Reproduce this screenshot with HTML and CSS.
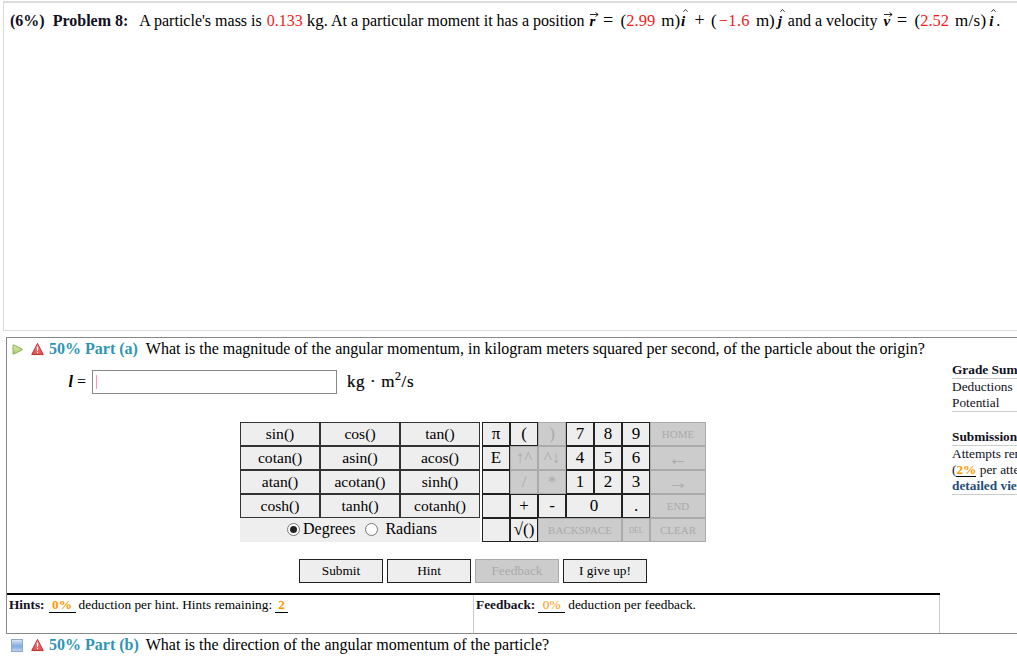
FILE: index.html
```html
<!DOCTYPE html>
<html lang="en">
<head>
<meta charset="utf-8">
<title>Problem 8</title>
<link rel="stylesheet" href="styles.css">
</head>
<body>
<svg class="defs" width="0" height="0" aria-hidden="true">
  <defs>
    <linearGradient id="gTri" x1="0" y1="0" x2="0" y2="1"><stop offset="0" stop-color="#dcebb0"/><stop offset="1" stop-color="#a9c968"/></linearGradient>
    <linearGradient id="gWarn" x1="0" y1="0" x2="0" y2="1"><stop offset="0" stop-color="#f59090"/><stop offset="1" stop-color="#e04a4a"/></linearGradient>
    <linearGradient id="gBox" x1="0" y1="0" x2="0" y2="1"><stop offset="0" stop-color="#dfe9f5"/><stop offset=".55" stop-color="#7fabe0"/><stop offset="1" stop-color="#c3d6ee"/></linearGradient>
  </defs>
</svg>
<section class="problem">
  <p class="statement"><b class="head">(6%)</b><b class="head pname">Problem 8:</b><span>A particle's mass is <span class="red">0.133</span> <span class="kg">kg</span>. At a particular moment it has a position</span><span class="acc vec ml5">r<svg class="arrow" viewBox="0 0 9 5"><path d="M0 2.5H8M5.5 .5L8.2 2.5L5.5 4.5" fill="none" stroke="#111" stroke-width=".9"/></svg></span><span class="op ml5">=</span><span class="m ml7">(<span class="val">2.99</span><span class="unit-m">m</span>)</span><span class="acc hatted ml1">i<svg class="hat" viewBox="0 0 5 3"><path d="M.4 2.8L2.5 .4L4.6 2.8" fill="none" stroke="#111" stroke-width=".8"/></svg></span><span class="op ml6">+</span><span class="m ml6">(<span class="val neg">−1.6</span><span class="unit-m">m</span>)</span><span class="acc hatted ml3 jw">j<svg class="hat" viewBox="0 0 5 3"><path d="M.4 2.8L2.5 .4L4.6 2.8" fill="none" stroke="#111" stroke-width=".8"/></svg></span><span class="ml4 plain">and a velocity</span><span class="acc vec ml6">v<svg class="arrow" viewBox="0 0 9 5"><path d="M0 2.5H8M5.5 .5L8.2 2.5L5.5 4.5" fill="none" stroke="#111" stroke-width=".9"/></svg></span><span class="op ml5">=</span><span class="m ml7">(<span class="val">2.52</span><span class="unit-m wide">m/s</span>)</span><span class="acc hatted ml3">i<svg class="hat" viewBox="0 0 5 3"><path d="M.4 2.8L2.5 .4L4.6 2.8" fill="none" stroke="#111" stroke-width=".8"/></svg></span><span class="plain">.</span></p>
</section>
<section class="part">
  <div class="main">
    <h2 class="part-title">
      <svg class="tri" viewBox="0 0 11 11"><path d="M1 1.2 Q1 .6 1.7 .9 L10 5 Q10.6 5.5 10 6 L1.7 10.1 Q1 10.4 1 9.8 Z" fill="url(#gTri)" stroke="#8fae5c" stroke-width="1"/></svg>
      <svg class="warn" viewBox="0 0 14 14"><path d="M7 1 L13.2 13 H.8 Z" fill="url(#gWarn)" stroke="#b82828" stroke-width="1" stroke-linejoin="round"/><path d="M6.2 4.6h1.6l-.3 4.6h-1z M6.3 10h1.4v1.6H6.3z" fill="#fff"/></svg>
      <span class="pct">50% Part (a)</span><span>What is the magnitude of the angular momentum, in kilogram meters squared per second, of the particle about the origin?</span>
    </h2>
    <div class="answer">
      <span class="sym"><em>l</em><span class="sym-eq">=</span></span>
      <span class="input"><span class="caret"></span></span>
      <span class="unit">kg · m<sup>2</sup>/s</span>
    </div>
    <div class="calc">
      <div class="funcs">
        <div class="fk">sin()</div><div class="fk">cos()</div><div class="fk">tan()</div>
        <div class="fk">cotan()</div><div class="fk">asin()</div><div class="fk">acos()</div>
        <div class="fk">atan()</div><div class="fk">acotan()</div><div class="fk">sinh()</div>
        <div class="fk">cosh()</div><div class="fk">tanh()</div><div class="fk">cotanh()</div>
        <div class="angle"><span class="radio on"></span>Degrees<span class="radio off"></span>Radians</div>
      </div>
      <div class="keys">
        <div class="k">π</div><div class="k">(</div><div class="k x">)</div><div class="k">7</div><div class="k">8</div><div class="k">9</div><div class="k x sm">HOME</div>
        <div class="k">E</div><div class="k x">↑^</div><div class="k x">^↓</div><div class="k">4</div><div class="k">5</div><div class="k">6</div><div class="k x arw">←</div>
        <div class="k"></div><div class="k x">/</div><div class="k x">*</div><div class="k">1</div><div class="k">2</div><div class="k">3</div><div class="k x arw">→</div>
        <div class="k"></div><div class="k">+</div><div class="k">-</div><div class="k w2">0</div><div class="k">.</div><div class="k x sm">END</div>
        <div class="k"></div><div class="k">√()</div><div class="k x sm w3">BACKSPACE</div><div class="k x xs">DEL</div><div class="k x sm">CLEAR</div>
      </div>
    </div>
    <div class="actions">
      <button class="btn" type="button">Submit</button>
      <button class="btn" type="button">Hint</button>
      <button class="btn dis" type="button">Feedback</button>
      <button class="btn" type="button">I give up!</button>
    </div>
    <div class="foot">
      <div class="hints"><b>Hints:</b><span class="ul w0">0%</span>deduction per hint. Hints remaining:<span class="ul w1">2</span></div>
      <div class="fb"><b>Feedback:</b><span class="ul w2u">0%</span>deduction per feedback.</div>
    </div>
  </div>
  <aside class="side">
    <h3>Grade Summary</h3>
    <div class="rows"><div>Deductions</div><div>Potential</div></div>
    <h3 class="sub">Submissions</h3>
    <div class="rows">
      <div>Attempts remaining</div>
      <div>(<span class="ul side-ul">2%</span> per attempt)</div>
      <div class="link">detailed view</div>
    </div>
  </aside>
</section>
<h2 class="part-title next">
  <svg class="minus" viewBox="0 0 12 13"><rect x=".5" y=".5" width="11" height="12" fill="url(#gBox)" stroke="#8fa8c8"/></svg>
  <svg class="warn" viewBox="0 0 14 14"><path d="M7 1 L13.2 13 H.8 Z" fill="url(#gWarn)" stroke="#b82828" stroke-width="1" stroke-linejoin="round"/><path d="M6.2 4.6h1.6l-.3 4.6h-1z M6.3 10h1.4v1.6H6.3z" fill="#fff"/></svg>
  <span class="pct b">50% Part (b)</span><span>What is the direction of the angular momentum of the particle?</span>
</h2>
</body>
</html>
```
FILE: styles.css
```css
html, body { margin: 0; padding: 0; }
body {
  width: 1017px; height: 658px; overflow: hidden; background: #fff;
  font-family: "Liberation Serif", "Times New Roman", serif; color: #000;
  font-size: 16px;
}
.defs { position: absolute; }
.problem {
  box-sizing: border-box; height: 330px; margin: 1px 0 0 3px;
  border-top: 2px solid #ddd; border-left: 1px solid #ddd;
  border-bottom: 1px solid #ddd;
}
.statement { margin: 0; padding: 9px 0 0 6px; font-size: 16px; line-height: 18px; white-space: nowrap; }
.head { color: #112; margin-right: 8px; }
.pname { margin-right: 11px; }
.red { color: #f01c1c; margin-left: 1px; }
.kg { font-size: 17px; }
.ml1 { margin-left: 1px; }
.ml3 { margin-left: 3px; }
.ml4 { margin-left: 4px; }
.ml5 { margin-left: 5px; }
.ml6 { margin-left: 6px; }
.ml7 { margin-left: 7px; }
.plain { font-size: 16px; }
.m { font-size: 17px; }
.val { color: #f01c1c; font-size: 16.5px; }
.neg { margin-left: 2px; letter-spacing: .3px; }
.unit-m { margin-left: 6px; }
.unit-m.wide { letter-spacing: .3px; }
.op { display: inline-block; width: 11px; text-align: center; font-size: 18px; line-height: 14px; }
.acc { position: relative; display: inline-block; width: 7px; font-style: italic; font-weight: bold; font-size: 15px; line-height: 14px; }
.vec { width: 8px; }
.jw { width: 6px; }
.hat { position: absolute; left: 2px; top: -5px; width: 5px; height: 3px; }
.arrow { position: absolute; left: 0; top: -2px; width: 9px; height: 5px; }
.part {
  box-sizing: border-box; width: 1100px; height: 297px; margin: 6px 0 0 6px;
  border-top: 1px solid #888; border-left: 1px solid #888; border-bottom: 1px solid #888;
  display: flex;
}
.main { width: 933px; flex: none; display: flex; flex-direction: column; }
.part-title { margin: 0; font-size: 16px; font-weight: normal; line-height: 20px; display: flex; align-items: center; white-space: nowrap; }
.main .part-title { padding: 1px 0 0 5px; height: 20px; }
.tri { width: 11px; height: 11px; flex: none; margin-right: 8px; }
.warn { width: 13px; height: 14px; flex: none; margin-right: 5px; }
.pct { color: #2f95b8; font-weight: bold; margin-right: 8px; }
.pct.b { margin-right: 7px; }
.answer { display: flex; align-items: center; height: 24px; margin-top: 11px; }
.sym { box-sizing: border-box; width: 85px; padding-right: 6px; display: flex; justify-content: flex-end; font-size: 16px; }
.sym em { font-weight: bold; margin-right: 4px; }
.input { box-sizing: border-box; width: 245px; height: 24px; border: 1px solid #888; display: flex; align-items: center; padding-left: 3px; margin-right: 10px; }
.caret { width: 1px; height: 14px; background: #f59ab8; }
.unit { font-size: 17px; letter-spacing: .6px; white-space: nowrap; -webkit-text-stroke: .2px #000; }
.unit sup { font-size: 12px; line-height: 0; }
.calc { display: flex; margin: 28px 0 0 233px; }
.funcs { display: grid; grid-template-columns: repeat(3, 80px); grid-auto-rows: 24px; width: 240px; }
.fk { box-sizing: border-box; background: #eee; border: 1px solid #333; display: flex; align-items: center; justify-content: center; font-size: 15.6px; }
.angle { box-sizing: border-box; grid-column: 1 / 4; background: #eee; display: flex; align-items: center; justify-content: center; font-size: 16px; padding: 0 0 2px 4px; }
.radio { box-sizing: border-box; width: 13px; height: 13px; border-radius: 50%; border: 1px solid #777; background: #fff; margin-right: 3px; position: relative; }
.radio.off { margin-left: 10px; margin-right: 7px; }
.radio.on::after { content: ""; position: absolute; left: 2px; top: 2px; width: 7px; height: 7px; border-radius: 50%; background: #222; }
.keys { display: grid; grid-template-columns: repeat(6, 28px) 56px; grid-auto-rows: 24px; margin-left: 2px; width: 224px; }
.k { box-sizing: border-box; background: #eee; border: 1px solid #222; display: flex; align-items: center; justify-content: center; font-size: 17px; white-space: nowrap; overflow: hidden; }
.k.x { background: #ccc; border-color: #aaa; color: #aaa; }
.k.sm { font-size: 11px; }
.k.arw { font-size: 20px; }
.k.xs { font-size: 7.5px; }
.k.w2 { grid-column: span 2; }
.k.w3 { grid-column: span 3; }
.actions { display: flex; gap: 4px; margin: 17px 0 0 292px; height: 24px; }
.btn { box-sizing: border-box; width: 84px; height: 24px; padding: 0; background: #eee; border: 1px solid #222; font: 13.33px "Liberation Serif", serif; color: #000; }
.btn.dis { background: #ccc; border: 1px solid #aaa; color: #aaa; }
.foot { display: flex; margin-top: 10px; border-top: 2px solid #000; flex: 1; font-size: 13.33px; }
.hints { width: 467px; box-sizing: border-box; padding: 2px 0 0 2px; border-right: 1px solid #ccc; white-space: nowrap; }
.fb { flex: 1; padding: 2px 0 0 2px; border-right: 1px solid #ccc; white-space: nowrap; }
.foot b { color: #112; }
.ul { display: inline-block; color: #f90; font-weight: bold; text-align: center; border-bottom: 1px solid #000; line-height: 14px; }
.w0 { width: 27px; margin: 0 3px 0 4px; }
.w1 { width: 13px; margin-left: 3px; }
.w2u { width: 27px; margin: 0 3px 0 3px; font-weight: normal; }
.side { padding: 24px 0 0 12px; width: 150px; font-size: 13.33px; white-space: nowrap; flex: none; }
.side h3 { margin: 0; font-size: 13.33px; line-height: 15px; color: #112; padding-bottom: 1px; border-bottom: 1px solid #ccc; }
.side .sub { margin-top: 17px; }
.rows { line-height: 16px; border-bottom: 1px solid #ccc; color: #112; }
.side-ul { line-height: 13px; }
.link { color: #1f4e79; font-weight: bold; }
.part-title.next { margin: 1px 0 0 11px; }
.minus { width: 12px; height: 13px; flex: none; margin-right: 8px; }
```
